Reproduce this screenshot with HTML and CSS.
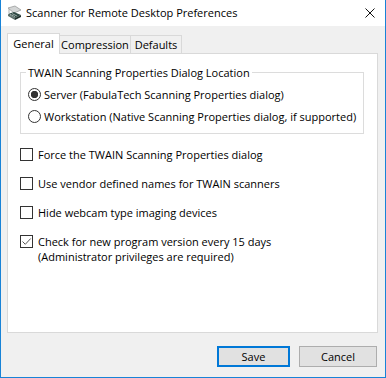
FILE: index.html
```html
<!DOCTYPE html>
<html lang="en">
<head>
  <meta charset="UTF-8">
  <title>Scanner for Remote Desktop Preferences</title>
  <link rel="stylesheet" href="styles.css">
</head>
<body>
  <div class="window">
    <div class="titlebar">
      <svg class="app-icon" width="16" height="16" viewBox="0 0 16 16">
        <path d="M2 3 L9 1 L15 5 L8 8 Z" fill="#d4d6d6" stroke="#9a9d9d" stroke-width="0.8"/>
        <path d="M2 9 L8 7 L15 10 L9 13 Z" fill="#2f4a44"/>
        <path d="M2 9 L9 13 L9 15 L2 11 Z" fill="#5d6f6a"/>
        <path d="M9 13 L15 10 L15 12 L9 15 Z" fill="#1d2e2a"/>
        <path d="M4 9.3 L9 11.7 M6 8.6 L11 11" stroke="#dfe7e4" stroke-width="0.6"/>
        <path d="M3 4 L3 8" stroke="#9a9d9d" stroke-width="0.8"/>
      </svg>
      <span class="title">Scanner for Remote Desktop Preferences</span>
      <svg class="close" width="10" height="10" viewBox="0 0 10 10">
        <path d="M0.5 0.5 L9.5 9.5 M9.5 0.5 L0.5 9.5" stroke="#111" stroke-width="1"/>
      </svg>
    </div>

    <div class="content">
      <div class="tabs">
        <div class="tab active">General</div>
        <div class="tab">Compression</div>
        <div class="tab">Defaults</div>
      </div>

      <div class="panel">
        <fieldset class="group">
          <legend>TWAIN Scanning Properties Dialog Location</legend>
          <div class="option">
            <span class="radio checked"></span>
            <span>Server (FabulaTech Scanning Properties dialog)</span>
          </div>
          <div class="option">
            <span class="radio"></span>
            <span>Workstation (Native Scanning Properties dialog, if supported)</span>
          </div>
        </fieldset>

        <div class="checks">
          <div class="option">
            <span class="box"></span>
            <span>Force the TWAIN Scanning Properties dialog</span>
          </div>
          <div class="option">
            <span class="box"></span>
            <span>Use vendor defined names for TWAIN scanners</span>
          </div>
          <div class="option">
            <span class="box"></span>
            <span>Hide webcam type imaging devices</span>
          </div>
          <div class="option multi">
            <span class="box">
              <svg width="11" height="11" viewBox="0 0 11 11">
                <path d="M1.5 5.5 L4.3 8.3 L9.7 2.5" fill="none" stroke="#555" stroke-width="1"/>
              </svg>
            </span>
            <span>Check for new program version every 15 days<br>(Administrator privileges are required)</span>
          </div>
        </div>
      </div>

      <div class="buttons">
        <button class="btn default">Save</button>
        <button class="btn">Cancel</button>
      </div>
    </div>
  </div>
</body>
</html>
```

FILE: styles.css
```css
body {
  margin: 0;
  font-family: "Open Sans", "Noto Sans", sans-serif;
  font-size: 11px;
  color: #000;
  background-color: #f0f0f0;
}
.window {
  box-sizing: border-box;
  width: 386px;
  height: 378px;
  border: 1px solid #1883d7;
  border-top: none;
  background-color: #f0f0f0;
  display: flex;
  flex-direction: column;
}
.titlebar {
  height: 26px;
  background-color: white;
  display: flex;
  align-items: center;
}
.app-icon {
  margin-left: 5px;
  margin-top: -1px;
}
.title {
  margin-left: 4px;
  font-size: 11px;
  flex: 1;
  margin-top: -1px;
}
.close {
  margin-right: 10px;
  margin-top: -1px;
}
.content {
  padding: 7px 7px 0 6px;
  flex: 1;
  display: flex;
  flex-direction: column;
}
.tabs {
  display: flex;
  align-items: flex-end;
  height: 20px;
  position: relative;
  z-index: 1;
}
.tab {
  box-sizing: border-box;
  height: 18px;
  border: 1px solid #d9d9d9;
  border-bottom: none;
  border-left: none;
  background-color: #f0f0f0;
  text-align: center;
  line-height: 15px;
  padding-top: 1px;
}
.tab:nth-child(2) {
  width: 71px;
}
.tab:nth-child(3) {
  width: 51px;
}
.tab.active {
  width: 53px;
  height: 21px;
  margin-bottom: -1px;
  border-left: 1px solid #d9d9d9;
  background-color: white;
  padding-top: 2px;
}
.panel {
  box-sizing: border-box;
  height: 280px;
  border: 1px solid #d9d9d9;
  background-color: white;
  padding: 0 0 0 12px;
}
.group {
  box-sizing: border-box;
  width: 344px;
  margin: 12px 0 0 0;
  padding: 0 0 10px 5px;
  border: 1px solid #dcdcdc;
  min-width: 0;
}
.group legend {
  padding: 0 2px;
  line-height: 13px;
}
.group .option {
  margin-left: 2px;
  margin-top: 9px;
}
.option {
  display: flex;
  align-items: flex-start;
  line-height: 13px;
}
.option.multi {
  line-height: 15px;
  margin-top: -1px;
}
.option.multi .box {
  margin-top: 1px;
}
.radio {
  box-sizing: border-box;
  width: 13px;
  height: 13px;
  border: 1px solid #333;
  border-radius: 50%;
  background-color: white;
  margin-right: 3px;
  flex-shrink: 0;
}
.radio.checked {
  background: radial-gradient(circle, #333 3.4px, white 4px);
}
.checks {
  display: flex;
  flex-direction: column;
  gap: 16px;
  margin-top: 14px;
}
.box {
  box-sizing: border-box;
  width: 13px;
  height: 13px;
  border: 1px solid #333;
  background-color: white;
  margin-right: 5px;
  flex-shrink: 0;
  display: flex;
}
.buttons {
  display: flex;
  justify-content: flex-end;
  gap: 9px;
  margin-top: 13px;
  padding-right: 1px;
}
.btn {
  box-sizing: border-box;
  height: 21px;
  width: 78px;
  padding: 0;
  border: 1px solid #adadad;
  background-color: #e1e1e1;
  font-family: "Open Sans", "Noto Sans", sans-serif;
  font-size: 11px;
  color: #000;
}
.btn.default {
  width: 73px;
  border: 2px solid #0078d7;
}
```
